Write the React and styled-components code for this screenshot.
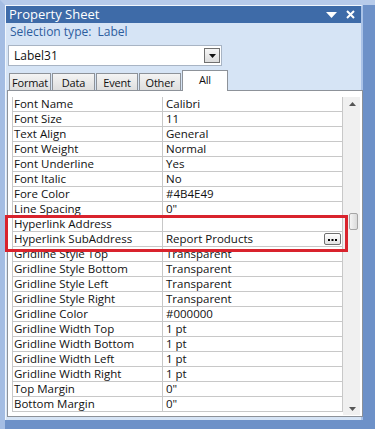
import React from "react";
import styled, { createGlobalStyle } from "styled-components";

const GlobalStyle = createGlobalStyle`
  html, body {
    margin: 0;
    padding: 0;
    background: #6d91c8;
  }
  body {
    font-family: "Open Sans", "Noto Sans", sans-serif;
  }
`;

const rows = [
  ["Font Name", "Calibri"],
  ["Font Size", "11"],
  ["Text Align", "General"],
  ["Font Weight", "Normal"],
  ["Font Underline", "Yes"],
  ["Font Italic", "No"],
  ["Fore Color", "#4B4E49"],
  ["Line Spacing", '0"'],
  ["Hyperlink Address", ""],
  ["Hyperlink SubAddress", "Report Products", true],
  ["Gridline Style Top", "Transparent"],
  ["Gridline Style Bottom", "Transparent"],
  ["Gridline Style Left", "Transparent"],
  ["Gridline Style Right", "Transparent"],
  ["Gridline Color", "#000000"],
  ["Gridline Width Top", "1 pt"],
  ["Gridline Width Bottom", "1 pt"],
  ["Gridline Width Left", "1 pt"],
  ["Gridline Width Right", "1 pt"],
  ["Top Margin", '0"'],
  ["Bottom Margin", '0"'],
];

const tabs = ["Format", "Data", "Event", "Other", "All"];
const tabWidths = [42, 43, 42, 42, 46];

export default function App() {
  return (
    <>
      <GlobalStyle />
      <Frame>
        <Panel>
          <TitleBar>
            <span>Property Sheet</span>
            <TitleIcons>
              <svg width="11" height="6" viewBox="0 0 11 6">
                <path d="M0 0 H11 L5.5 6 Z" fill="#fff" />
              </svg>
              <svg width="9" height="9" viewBox="0 0 9 9">
                <path d="M1 1 L8 8 M8 1 L1 8" stroke="#fff" strokeWidth="2" />
              </svg>
            </TitleIcons>
          </TitleBar>

          <SelectionType>Selection type:&nbsp; Label</SelectionType>

          <Combo>
            <span>Label31</span>
            <ComboButton>
              <svg width="7" height="4" viewBox="0 0 7 4">
                <path d="M0 0 H7 L3.5 4 Z" fill="#111" />
              </svg>
            </ComboButton>
          </Combo>

          <TabRow>
            {tabs.map((t, i) => (
              <Tab key={t} $active={t === "All"} $w={tabWidths[i]}>
                {t}
              </Tab>
            ))}
          </TabRow>

          <Grid>
            <RowList>
              {rows.map(([label, value, hasBuilder]) => (
                <Row key={label}>
                  <LabelCell>{label}</LabelCell>
                  <ValueCell>
                    <span>{value}</span>
                    {hasBuilder && (
                      <BuilderButton>
                        <svg width="9" height="2" viewBox="0 0 9 2">
                          <rect x="0" y="0" width="2" height="2" fill="#000" />
                          <rect x="3.5" y="0" width="2" height="2" fill="#000" />
                          <rect x="7" y="0" width="2" height="2" fill="#000" />
                        </svg>
                      </BuilderButton>
                    )}
                  </ValueCell>
                </Row>
              ))}
              <Highlight />
            </RowList>

            <ScrollBar>
              <Arrow>
                <svg width="7" height="4" viewBox="0 0 7 4">
                  <path d="M0 4 H7 L3.5 0 Z" fill="#555" />
                </svg>
              </Arrow>
              <Track>
                <Thumb />
              </Track>
              <Arrow>
                <svg width="7" height="4" viewBox="0 0 7 4">
                  <path d="M0 0 H7 L3.5 4 Z" fill="#555" />
                </svg>
              </Arrow>
            </ScrollBar>
          </Grid>
        </Panel>
      </Frame>
    </>
  );
}

const Frame = styled.div`
  width: 375px;
  height: 429px;
  box-sizing: border-box;
  background: #6d91c8;
  border-top: 5px solid #b7cbea;
  border-left: 5px solid #a4bde3;
  overflow: hidden;
`;

const Panel = styled.div`
  width: 358px;
  box-sizing: border-box;
  background: #d6e4f5;
  border-top: 1px solid #f2f7fd;
  border-left: 1px solid #f2f7fd;
  border-right: 2px solid #a9c2e7;
  padding-bottom: 3px;
  display: flex;
  flex-direction: column;
`;

const TitleBar = styled.div`
  height: 17px;
  background: #3e6ba8;
  color: #fff;
  font-size: 13px;
  line-height: 17px;
  padding: 0 4px 0 3px;
  display: flex;
  align-items: center;
  justify-content: space-between;
`;

const TitleIcons = styled.div`
  display: flex;
  align-items: center;
  gap: 9px;
  padding-right: 2px;
  svg {
    display: block;
  }
`;

const SelectionType = styled.div`
  height: 18px;
  line-height: 18px;
  padding-left: 4px;
  color: #2d5d9e;
  font-size: 12px;
`;

const Combo = styled.div`
  margin: 4px 0 0 2px;
  width: 214px;
  height: 21px;
  box-sizing: border-box;
  background: #fff;
  border: 1px solid #a8b4c4;
  display: flex;
  align-items: center;
  justify-content: space-between;
  padding: 0 1px 0 5px;
  font-size: 12px;
  color: #111;
`;

const ComboButton = styled.div`
  width: 16px;
  height: 15px;
  box-sizing: border-box;
  border: 1px solid #707070;
  background: linear-gradient(#f6f6f6, #dcdcdc);
  display: flex;
  align-items: center;
  justify-content: center;
  svg {
    display: block;
  }
`;

const TabRow = styled.div`
  margin: 4px 0 -1px 3px;
  height: 21px;
  display: flex;
  align-items: flex-end;
  gap: 1px;
  position: relative;
  z-index: 1;
`;

const Tab = styled.div`
  width: ${({ $w }) => $w}px;
  height: ${({ $active }) => ($active ? 21 : 18)}px;
  box-sizing: border-box;
  border: 1px solid #8d9299;
  border-bottom: ${({ $active }) => ($active ? "none" : "1px solid #8d9299")};
  background: ${({ $active }) =>
    $active ? "#fff" : "linear-gradient(#f4f4f4, #dedede)"};
  font-size: 11px;
  letter-spacing: -0.2px;
  color: #111;
  text-align: center;
  white-space: nowrap;
  line-height: ${({ $active }) => ($active ? 16 : 17)}px;
  padding-top: ${({ $active }) => ($active ? 1 : 0)}px;
`;

const Grid = styled.div`
  margin-left: 1px;
  width: 356px;
  box-sizing: border-box;
  background: #fff;
  border: 1px solid #8d9299;
  padding: 6px 2px 1px 4px;
  display: flex;
  align-items: flex-start;
`;

const RowList = styled.div`
  position: relative;
  border-left: 1px solid #c8c8c8;
  width: 331px;
`;

const Row = styled.div`
  display: grid;
  grid-template-columns: 150px 180px;
  height: 15px;
  box-sizing: border-box;
  border-bottom: 1px solid #c8c8c8;
  font-size: 11.5px;
  line-height: 14px;
  color: #111;
`;

const LabelCell = styled.div`
  border-right: 1px solid #c8c8c8;
  padding-left: 1px;
  white-space: nowrap;
  overflow: hidden;
`;

const ValueCell = styled.div`
  border-right: 1px solid #c8c8c8;
  padding-left: 3px;
  display: flex;
  align-items: center;
  justify-content: space-between;
  white-space: nowrap;
`;

const BuilderButton = styled.div`
  width: 17px;
  height: 12px;
  box-sizing: border-box;
  margin-right: 1px;
  border: 1px solid #6f6f6f;
  border-radius: 2px;
  background: linear-gradient(#ffffff, #e2e2e2);
  display: flex;
  align-items: center;
  justify-content: center;
  svg {
    display: block;
    margin-top: 2px;
  }
`;

const Highlight = styled.div`
  position: absolute;
  left: -8px;
  top: 118px;
  width: 343px;
  height: 37px;
  box-sizing: border-box;
  border: 3px solid #d9232d;
  pointer-events: none;
`;

const ScrollBar = styled.div`
  width: 17px;
  height: 318px;
  background: #f0f0f0;
  display: flex;
  flex-direction: column;
`;

const Arrow = styled.div`
  height: 13px;
  display: flex;
  align-items: center;
  justify-content: center;
  padding-left: 2px;
  svg {
    display: block;
  }
`;

const Track = styled.div`
  flex: 1;
  position: relative;
`;

const Thumb = styled.div`
  position: absolute;
  top: 103px;
  left: 6px;
  width: 9px;
  height: 17px;
  box-sizing: border-box;
  border: 1px solid #a5a5a5;
  border-radius: 2px;
  background: linear-gradient(90deg, #f4f4f4, #dadada);
`;
